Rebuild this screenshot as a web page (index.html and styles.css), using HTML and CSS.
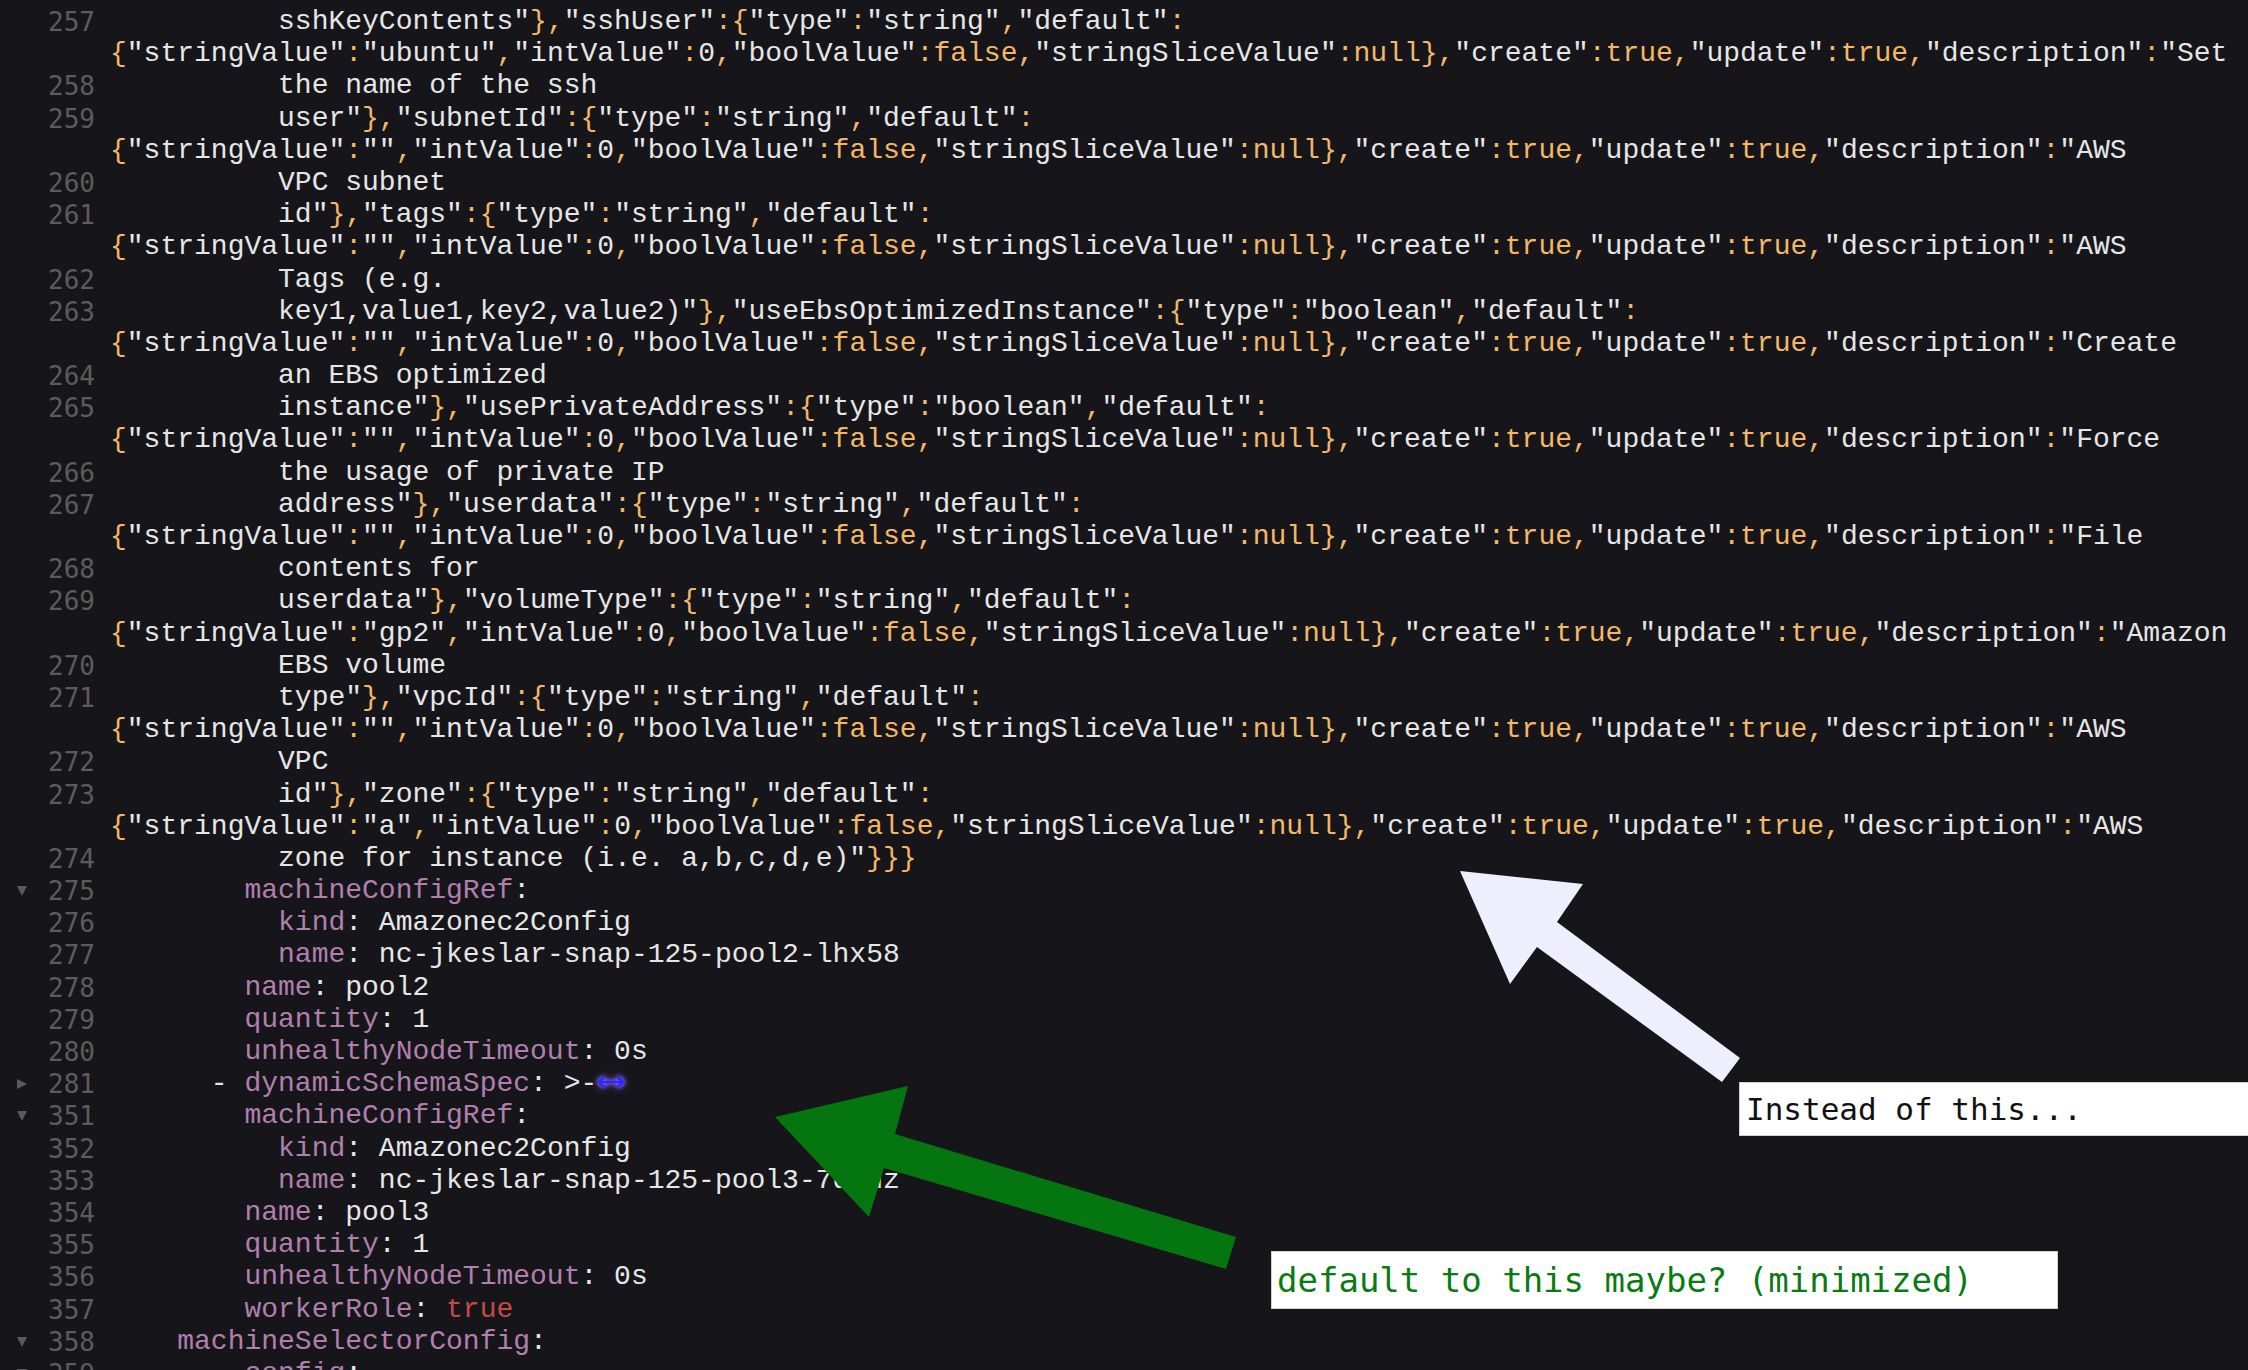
FILE: index.html
```html
<!DOCTYPE html>
<html>
<head>
  <meta charset="utf-8">
  <link rel="stylesheet" href="styles.css">
</head>
<body>
  <div class="editor">
    <div class="line"><span class="gutter"><span class="fold"></span><span class="num">257</span></span><span class="code json">          sshKeyContents"},"sshUser":{"type":"string","default":</span></div>
    <div class="line"><span class="gutter"></span><span class="code json">{"stringValue":"ubuntu","intValue":0,"boolValue":false,"stringSliceValue":null},"create":true,"update":true,"description":"Set</span></div>
    <div class="line"><span class="gutter"><span class="fold"></span><span class="num">258</span></span><span class="code json">          the name of the ssh</span></div>
    <div class="line"><span class="gutter"><span class="fold"></span><span class="num">259</span></span><span class="code json">          user"},"subnetId":{"type":"string","default":</span></div>
    <div class="line"><span class="gutter"></span><span class="code json">{"stringValue":"","intValue":0,"boolValue":false,"stringSliceValue":null},"create":true,"update":true,"description":"AWS</span></div>
    <div class="line"><span class="gutter"><span class="fold"></span><span class="num">260</span></span><span class="code json">          VPC subnet</span></div>
    <div class="line"><span class="gutter"><span class="fold"></span><span class="num">261</span></span><span class="code json">          id"},"tags":{"type":"string","default":</span></div>
    <div class="line"><span class="gutter"></span><span class="code json">{"stringValue":"","intValue":0,"boolValue":false,"stringSliceValue":null},"create":true,"update":true,"description":"AWS</span></div>
    <div class="line"><span class="gutter"><span class="fold"></span><span class="num">262</span></span><span class="code json">          Tags (e.g.</span></div>
    <div class="line"><span class="gutter"><span class="fold"></span><span class="num">263</span></span><span class="code json">          key1,value1,key2,value2)"},"useEbsOptimizedInstance":{"type":"boolean","default":</span></div>
    <div class="line"><span class="gutter"></span><span class="code json">{"stringValue":"","intValue":0,"boolValue":false,"stringSliceValue":null},"create":true,"update":true,"description":"Create</span></div>
    <div class="line"><span class="gutter"><span class="fold"></span><span class="num">264</span></span><span class="code json">          an EBS optimized</span></div>
    <div class="line"><span class="gutter"><span class="fold"></span><span class="num">265</span></span><span class="code json">          instance"},"usePrivateAddress":{"type":"boolean","default":</span></div>
    <div class="line"><span class="gutter"></span><span class="code json">{"stringValue":"","intValue":0,"boolValue":false,"stringSliceValue":null},"create":true,"update":true,"description":"Force</span></div>
    <div class="line"><span class="gutter"><span class="fold"></span><span class="num">266</span></span><span class="code json">          the usage of private IP</span></div>
    <div class="line"><span class="gutter"><span class="fold"></span><span class="num">267</span></span><span class="code json">          address"},"userdata":{"type":"string","default":</span></div>
    <div class="line"><span class="gutter"></span><span class="code json">{"stringValue":"","intValue":0,"boolValue":false,"stringSliceValue":null},"create":true,"update":true,"description":"File</span></div>
    <div class="line"><span class="gutter"><span class="fold"></span><span class="num">268</span></span><span class="code json">          contents for</span></div>
    <div class="line"><span class="gutter"><span class="fold"></span><span class="num">269</span></span><span class="code json">          userdata"},"volumeType":{"type":"string","default":</span></div>
    <div class="line"><span class="gutter"></span><span class="code json">{"stringValue":"gp2","intValue":0,"boolValue":false,"stringSliceValue":null},"create":true,"update":true,"description":"Amazon</span></div>
    <div class="line"><span class="gutter"><span class="fold"></span><span class="num">270</span></span><span class="code json">          EBS volume</span></div>
    <div class="line"><span class="gutter"><span class="fold"></span><span class="num">271</span></span><span class="code json">          type"},"vpcId":{"type":"string","default":</span></div>
    <div class="line"><span class="gutter"></span><span class="code json">{"stringValue":"","intValue":0,"boolValue":false,"stringSliceValue":null},"create":true,"update":true,"description":"AWS</span></div>
    <div class="line"><span class="gutter"><span class="fold"></span><span class="num">272</span></span><span class="code json">          VPC</span></div>
    <div class="line"><span class="gutter"><span class="fold"></span><span class="num">273</span></span><span class="code json">          id"},"zone":{"type":"string","default":</span></div>
    <div class="line"><span class="gutter"></span><span class="code json">{"stringValue":"a","intValue":0,"boolValue":false,"stringSliceValue":null},"create":true,"update":true,"description":"AWS</span></div>
    <div class="line"><span class="gutter"><span class="fold"></span><span class="num">274</span></span><span class="code json">          zone for instance (i.e. a,b,c,d,e)"}}}</span></div>
    <div class="line"><span class="gutter"><span class="fold open"></span><span class="num">275</span></span><span class="code">        <span class="key">machineConfigRef</span>:</span></div>
    <div class="line"><span class="gutter"><span class="fold"></span><span class="num">276</span></span><span class="code">          <span class="key">kind</span>: Amazonec2Config</span></div>
    <div class="line"><span class="gutter"><span class="fold"></span><span class="num">277</span></span><span class="code">          <span class="key">name</span>: nc-jkeslar-snap-125-pool2-lhx58</span></div>
    <div class="line"><span class="gutter"><span class="fold"></span><span class="num">278</span></span><span class="code">        <span class="key">name</span>: pool2</span></div>
    <div class="line"><span class="gutter"><span class="fold"></span><span class="num">279</span></span><span class="code">        <span class="key">quantity</span>: 1</span></div>
    <div class="line"><span class="gutter"><span class="fold"></span><span class="num">280</span></span><span class="code">        <span class="key">unhealthyNodeTimeout</span>: 0s</span></div>
    <div class="line"><span class="gutter"><span class="fold closed"></span><span class="num">281</span></span><span class="code">      - <span class="key">dynamicSchemaSpec</span>: &gt;-<svg class="expand" width="28" height="14" viewBox="0 0 28 14"><path d="M2 7 H26 M7.5 2 L2 7 L7.5 12 M20.5 2 L26 7 L20.5 12"/></svg></span></div>
    <div class="line"><span class="gutter"><span class="fold open"></span><span class="num">351</span></span><span class="code">        <span class="key">machineConfigRef</span>:</span></div>
    <div class="line"><span class="gutter"><span class="fold"></span><span class="num">352</span></span><span class="code">          <span class="key">kind</span>: Amazonec2Config</span></div>
    <div class="line"><span class="gutter"><span class="fold"></span><span class="num">353</span></span><span class="code">          <span class="key">name</span>: nc-jkeslar-snap-125-pool3-7d9hz</span></div>
    <div class="line"><span class="gutter"><span class="fold"></span><span class="num">354</span></span><span class="code">        <span class="key">name</span>: pool3</span></div>
    <div class="line"><span class="gutter"><span class="fold"></span><span class="num">355</span></span><span class="code">        <span class="key">quantity</span>: 1</span></div>
    <div class="line"><span class="gutter"><span class="fold"></span><span class="num">356</span></span><span class="code">        <span class="key">unhealthyNodeTimeout</span>: 0s</span></div>
    <div class="line"><span class="gutter"><span class="fold"></span><span class="num">357</span></span><span class="code">        <span class="key">workerRole</span>: <span class="bool">true</span></span></div>
    <div class="line"><span class="gutter"><span class="fold open"></span><span class="num">358</span></span><span class="code">    <span class="key">machineSelectorConfig</span>:</span></div>
    <div class="line"><span class="gutter"><span class="fold open"></span><span class="num">359</span></span><span class="code">      - <span class="key">config</span>:</span></div>
  </div>

  <svg class="arrows" width="2248" height="1370" viewBox="0 0 2248 1370">
    <polygon class="arrow-light" points="1460,871 1583,884 1557,922 1740,1058 1722,1082 1537,947 1510,984"/>
    <polygon class="arrow-green" points="775,1117 908,1086 895,1134 1236,1237 1226,1269 884,1168 869,1217"/>
  </svg>

  <div class="note note-before">Instead of this...</div>
  <div class="note note-after">default to this maybe? (minimized)</div>

  <script src="highlight.js"></script>
</body>
</html>
```

FILE: styles.css
```css
html, body {
  margin: 0;
  height: 1370px;
  overflow: hidden;
}

body {
  position: relative;
  background: #16161a;
  color: #e6e6e6;
}

.editor {
  padding-top: 6px;
}

.line {
  display: flex;
  height: 32.2px;
  line-height: 32.2px;
}

.gutter {
  display: flex;
  align-items: center;
  width: 95px;
  flex-shrink: 0;
}

.fold {
  width: 12px;
  margin-left: 17px;
  display: flex;
  align-items: center;
}

.fold.open::before {
  content: "";
  border-left: 5px solid transparent;
  border-right: 5px solid transparent;
  border-top: 10px solid #5a5a5a;
}

.fold.closed::before {
  content: "";
  border-top: 5px solid transparent;
  border-bottom: 5px solid transparent;
  border-left: 10px solid #5a5a5a;
}

.num {
  flex: 1;
  text-align: right;
  font-family: "DejaVu Sans Mono", monospace;
  font-size: 26px;
  color: #5c5c5c;
}

.code {
  margin-left: 15px;
  white-space: pre;
  font-family: "Courier New", "Nimbus Mono PS", "Nimbus Mono L", "FreeMono", "Liberation Mono", monospace;
  font-size: 28px;
}

.key {
  color: #b07fae;
}

.bool {
  color: #c64a44;
}

.punct {
  color: #f3b766;
}

.expand {
  vertical-align: middle;
  margin-top: -4px;
  fill: none;
  stroke: #2a2aff;
  stroke-width: 2.6;
  filter: drop-shadow(0 0 2px #9a7cff) drop-shadow(0 0 3px #6a4cdf);
}

.arrows {
  position: absolute;
  top: 0;
  left: 0;
  pointer-events: none;
}

.arrow-light {
  fill: #eeeefc;
}

.arrow-green {
  fill: #04750f;
}

.note {
  position: absolute;
  box-sizing: border-box;
  background: white;
  border: 1px solid #d0d0d0;
  font-family: "DejaVu Sans Mono", monospace;
  white-space: pre;
}

.note-before {
  left: 1739px;
  top: 1082px;
  width: 520px;
  height: 54px;
  line-height: 52px;
  padding-left: 6px;
  font-size: 31px;
  color: #111;
}

.note-after {
  left: 1271px;
  top: 1251px;
  width: 787px;
  height: 58px;
  line-height: 56px;
  padding-left: 5px;
  font-size: 34px;
  color: #0a7a12;
}
```

FILE: highlight.js
```js
// colour the punctuation and literals of the folded json, outside of strings
var rows = document.querySelectorAll('.json');
var inString = true; // first row starts in the middle of a description

rows.forEach(function (row) {
  var text = row.textContent;
  var html = '';
  var i = 0;
  while (i < text.length) {
    var ch = text[i];
    if (inString) {
      if (ch === '"') inString = false;
      html += ch;
      i++;
      continue;
    }
    if (ch === '"') {
      inString = true;
      html += ch;
      i++;
      continue;
    }
    var word = text.slice(i).match(/^(true|false|null)/);
    if (word) {
      html += '<span class="punct">' + word[0] + '</span>';
      i += word[0].length;
      continue;
    }
    if ('{}:,'.indexOf(ch) !== -1) {
      html += '<span class="punct">' + ch + '</span>';
    } else {
      html += ch;
    }
    i++;
  }
  row.innerHTML = html;
});
```
